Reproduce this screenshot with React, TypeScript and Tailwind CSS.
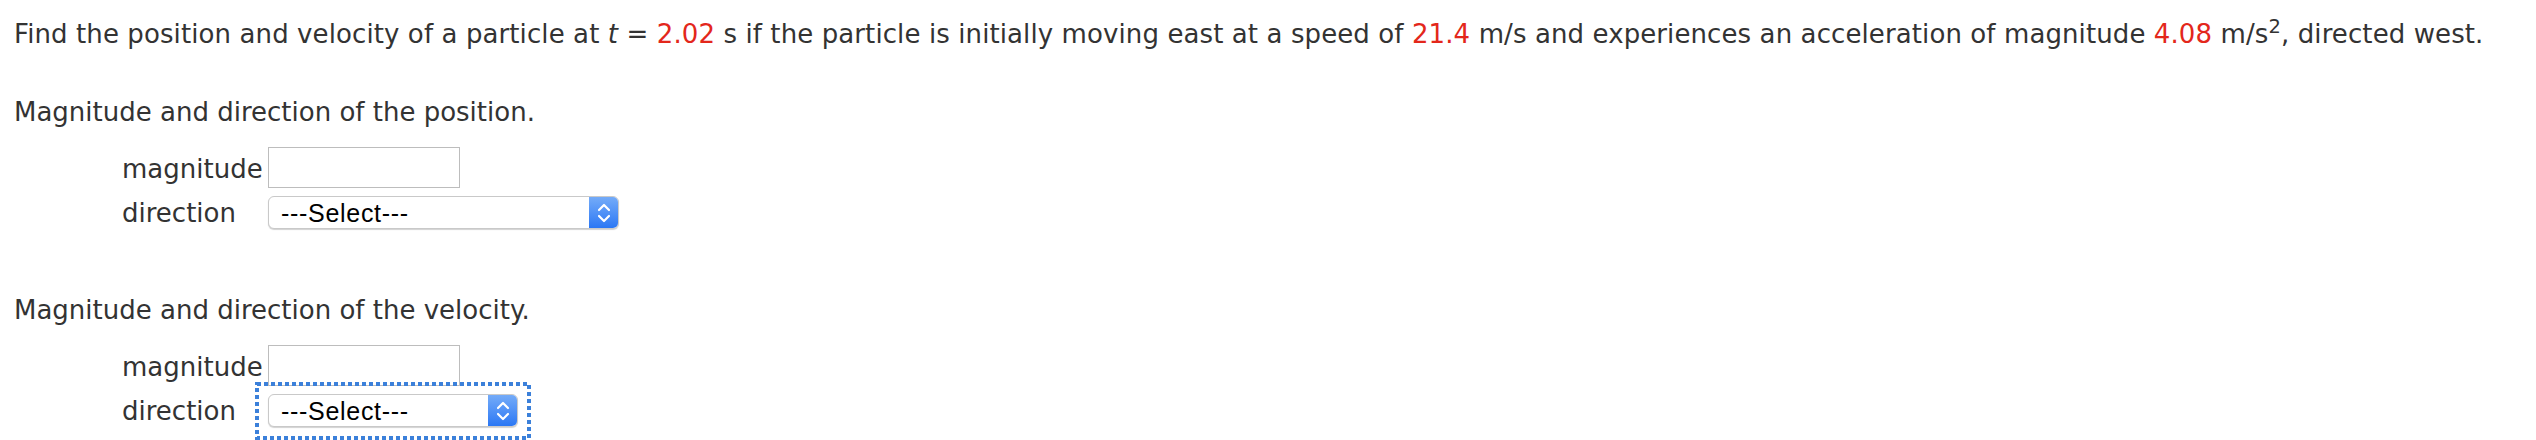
import React from "react"

const red = "text-[#e3271b]"

function Chevrons() {
  return (
    <svg width="16" height="24" viewBox="0 0 16 24" fill="none">
      <path d="M3 9 L8 4 L13 9" stroke="white" strokeWidth="2.2" strokeLinecap="round" strokeLinejoin="round" />
      <path d="M3 15 L8 20 L13 15" stroke="white" strokeWidth="2.2" strokeLinecap="round" strokeLinejoin="round" />
    </svg>
  )
}

function FakeSelect({ width }: { width: string }) {
  return (
    <div
      className={`${width} h-[33px] flex items-stretch rounded-[6px] border border-[#c9c9c9] bg-white shadow-[0_1px_1px_rgba(0,0,0,0.18)] overflow-hidden`}
    >
      <div className="flex-1 flex items-center pl-[12px] text-[25px] tracking-[0.7px] text-black font-['Liberation_Sans',Arial,sans-serif]">
        ---Select---
      </div>
      <div className="w-[29px] flex items-center justify-center bg-gradient-to-b from-[#74abf8] to-[#2a77f4]">
        <Chevrons />
      </div>
    </div>
  )
}

function FocusRing({ children }: { children: React.ReactNode }) {
  return (
    <span className="relative inline-block">
      {children}
      <svg
        className="absolute -left-[13px] -top-[12px] pointer-events-none"
        width="276"
        height="58"
        viewBox="0 0 276 58"
      >
        <rect x="2" y="2" width="272" height="54" fill="none" stroke="#3b80da" strokeWidth="4" strokeDasharray="4 3" />
      </svg>
    </span>
  )
}

function Block({ title, focused }: { title: string; focused?: boolean }) {
  return (
    <div>
      <p>{title}</p>
      <div className="mt-[19px] ml-[108px] grid grid-cols-[146px_auto] gap-y-[8px] tracking-normal">
        <div className="h-[41px] flex items-center pt-[3px]">magnitude</div>
        <div className="h-[41px]">
          <input type="text" className="w-[192px] h-[41px] border border-[#bdbdbd] bg-white outline-none" />
        </div>
        <div className="h-[33px] flex items-center">direction</div>
        <div className="h-[33px]">
          {focused ? (
            <FocusRing>
              <FakeSelect width="w-[250px]" />
            </FocusRing>
          ) : (
            <FakeSelect width="w-[351px]" />
          )}
        </div>
      </div>
    </div>
  )
}

export default function App() {
  return (
    <div className="w-[2536px] h-[440px] overflow-hidden bg-white pt-[18px] pl-[14px] text-[26px] leading-[32px] text-[#333] font-['DejaVu_Sans',Verdana,sans-serif]">
      <p className="whitespace-nowrap tracking-[0.1px]">
        Find the position and velocity of a particle at <i>t</i> = <span className={red}>2.02</span> s if the
        particle is initially moving east at a speed of <span className={red}>21.4</span> m/s and experiences an
        acceleration of magnitude <span className={red}>4.08</span> m/s<sup>2</sup>, directed west.
      </p>

      <div className="mt-[46px]">
        <Block title="Magnitude and direction of the position." />
      </div>

      <div className="mt-[65px]">
        <Block title="Magnitude and direction of the velocity." focused />
      </div>
    </div>
  )
}
